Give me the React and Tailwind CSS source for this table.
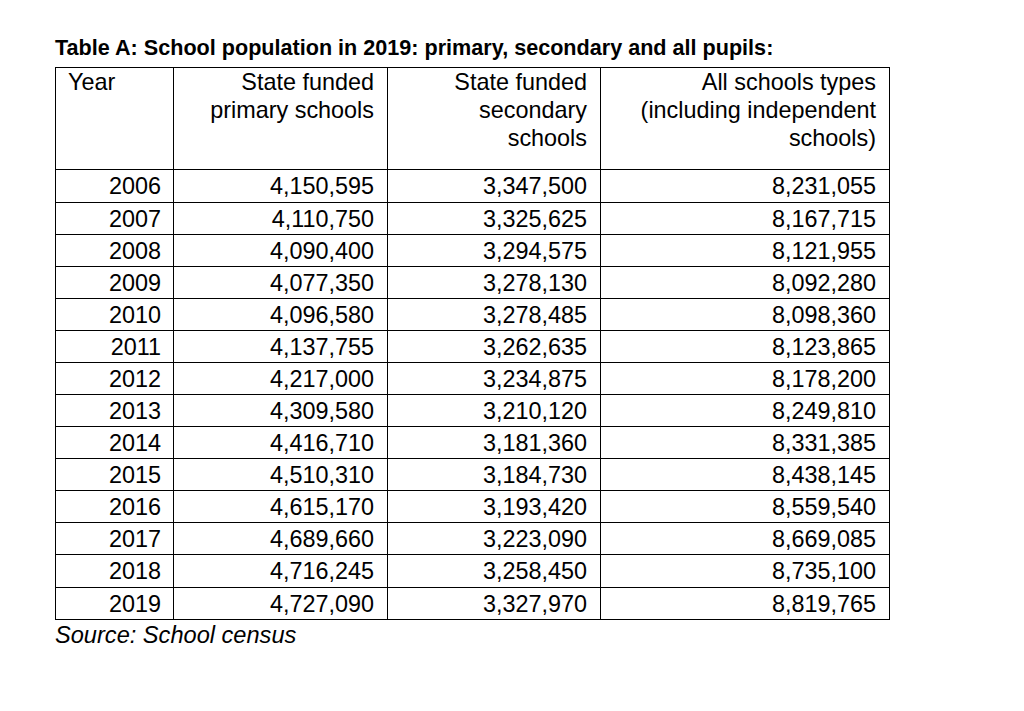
import React from "react";

const rows = [
  ["2006", "4,150,595", "3,347,500", "8,231,055"],
  ["2007", "4,110,750", "3,325,625", "8,167,715"],
  ["2008", "4,090,400", "3,294,575", "8,121,955"],
  ["2009", "4,077,350", "3,278,130", "8,092,280"],
  ["2010", "4,096,580", "3,278,485", "8,098,360"],
  ["2011", "4,137,755", "3,262,635", "8,123,865"],
  ["2012", "4,217,000", "3,234,875", "8,178,200"],
  ["2013", "4,309,580", "3,210,120", "8,249,810"],
  ["2014", "4,416,710", "3,181,360", "8,331,385"],
  ["2015", "4,510,310", "3,184,730", "8,438,145"],
  ["2016", "4,615,170", "3,193,420", "8,559,540"],
  ["2017", "4,689,660", "3,223,090", "8,669,085"],
  ["2018", "4,716,245", "3,258,450", "8,735,100"],
  ["2019", "4,727,090", "3,327,970", "8,819,765"],
];

export default function App() {
  return (
    <div
      className="w-[1024px] h-[711px] bg-white text-black pl-[55px] pt-[36px]"
      style={{ fontFamily: '"Liberation Sans", Arial, sans-serif' }}
    >
      <div className="font-bold text-[21.6px] leading-[24px] mb-[7px] whitespace-nowrap">
        Table A: School population in 2019: primary, secondary and all pupils:
      </div>
      <div className="w-[835px] border-l border-t border-black grid grid-cols-[118px_214px_213px_289px] text-[23.4px] leading-[28px]">
        <div className="h-[102px] border-r border-b border-black pl-[12px]">Year</div>
        <div className="h-[102px] border-r border-b border-black pr-[13px] text-right">
          State funded
          <br />
          primary schools
        </div>
        <div className="h-[102px] border-r border-b border-black pr-[13px] text-right">
          State funded
          <br />
          secondary
          <br />
          schools
        </div>
        <div className="h-[102px] border-r border-b border-black pr-[13px] text-right">
          All schools types
          <br />
          (including independent
          <br />
          schools)
        </div>
        {rows.map((r, i) => {
          const h = i === 0 || i === 12 ? "h-[33px]" : "h-[32px]";
          return (
            <React.Fragment key={r[0]}>
              <div className={`${h} border-r border-b border-black pr-[12px] flex items-center justify-end`}>{r[0]}</div>
              <div className={`${h} border-r border-b border-black pr-[13px] flex items-center justify-end`}>{r[1]}</div>
              <div className={`${h} border-r border-b border-black pr-[13px] flex items-center justify-end`}>{r[2]}</div>
              <div className={`${h} border-r border-b border-black pr-[13px] flex items-center justify-end`}>{r[3]}</div>
            </React.Fragment>
          );
        })}
      </div>
      <div className="italic text-[23.6px] leading-[24px] mt-[3px]">Source: School census</div>
    </div>
  );
}
